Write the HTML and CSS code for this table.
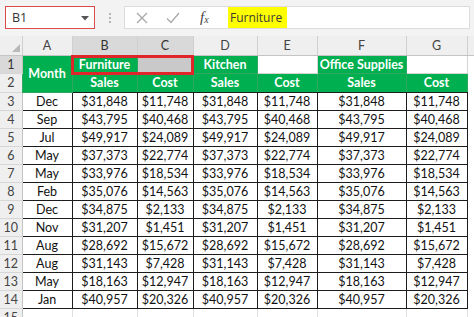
FILE: index.html
```html
<!DOCTYPE html>
<html>
<head>
<meta charset="utf-8">
<link rel="stylesheet" href="styles.css">
</head>
<body>
<div class="app">
  <div class="formula-bar">
    <div class="namebox">
      <span class="ref">B1</span>
      <svg class="caret" width="8" height="5" viewBox="0 0 8 5"><path d="M0 0 L8 0 L4 4.5 Z" fill="#555"/></svg>
    </div>
    <div class="dots"><i></i><i></i><i></i></div>
    <div class="fbox">
      <div class="ficons">
        <svg width="12" height="12" viewBox="0 0 12 12"><path d="M1 1 L11 11 M11 1 L1 11" stroke="#a8a8a8" stroke-width="1.3" fill="none"/></svg>
        <svg width="14" height="12" viewBox="0 0 14 12"><path d="M1 6.5 L5 10.5 L13 1" stroke="#a8a8a8" stroke-width="1.3" fill="none"/></svg>
        <span class="fx">f<sub>x</sub></span>
      </div>
      <div class="fcontent"><span class="hl">Furniture</span></div>
    </div>
  </div>
  <div class="sheet">
    <table class="grid">
      <colgroup>
        <col class="c-rn"><col class="c-a"><col class="c-b"><col class="c-c"><col class="c-d"><col class="c-e"><col class="c-f"><col class="c-g"><col class="c-h">
      </colgroup>
      <tr class="colhead">
        <th class="corner"><svg width="8" height="8" viewBox="0 0 8 8"><path d="M8 0 L8 8 L0 8 Z" fill="#b9b9b9"/></svg></th>
        <th>A</th><th class="sel">B</th><th class="sel">C</th><th>D</th><th>E</th><th>F</th><th>G</th><th></th>
      </tr>
      <tr class="hrow">
        <th class="rn sel">1</th>
        <td class="g month" rowspan="2">Month</td>
        <td class="g">Furniture</td>
        <td class="gsel"></td>
        <td class="g">Kitchen</td>
        <td class="w"></td>
        <td class="g">Office Supplies</td>
        <td class="w"></td>
        <td class="blank"></td>
      </tr>
      <tr class="hrow">
        <th class="rn">2</th>
        <td class="g">Sales</td><td class="g">Cost</td><td class="g">Sales</td><td class="g">Cost</td><td class="g">Sales</td><td class="g">Cost</td>
        <td class="blank"></td>
      </tr>
      <tr><th class="rn">3</th><td>Dec</td><td>$31,848</td><td>$11,748</td><td>$31,848</td><td>$11,748</td><td>$31,848</td><td>$11,748</td><td class="blank"></td></tr>
      <tr><th class="rn">4</th><td>Sep</td><td>$43,795</td><td>$40,468</td><td>$43,795</td><td>$40,468</td><td>$43,795</td><td>$40,468</td><td class="blank"></td></tr>
      <tr><th class="rn">5</th><td>Jul</td><td>$49,917</td><td>$24,089</td><td>$49,917</td><td>$24,089</td><td>$49,917</td><td>$24,089</td><td class="blank"></td></tr>
      <tr><th class="rn">6</th><td>May</td><td>$37,373</td><td>$22,774</td><td>$37,373</td><td>$22,774</td><td>$37,373</td><td>$22,774</td><td class="blank"></td></tr>
      <tr><th class="rn">7</th><td>May</td><td>$33,976</td><td>$18,534</td><td>$33,976</td><td>$18,534</td><td>$33,976</td><td>$18,534</td><td class="blank"></td></tr>
      <tr><th class="rn">8</th><td>Feb</td><td>$35,076</td><td>$14,563</td><td>$35,076</td><td>$14,563</td><td>$35,076</td><td>$14,563</td><td class="blank"></td></tr>
      <tr><th class="rn">9</th><td>Dec</td><td>$34,875</td><td>$2,133</td><td>$34,875</td><td>$2,133</td><td>$34,875</td><td>$2,133</td><td class="blank"></td></tr>
      <tr><th class="rn">10</th><td>Nov</td><td>$31,207</td><td>$1,451</td><td>$31,207</td><td>$1,451</td><td>$31,207</td><td>$1,451</td><td class="blank"></td></tr>
      <tr><th class="rn">11</th><td>Aug</td><td>$28,692</td><td>$15,672</td><td>$28,692</td><td>$15,672</td><td>$28,692</td><td>$15,672</td><td class="blank"></td></tr>
      <tr><th class="rn">12</th><td>Aug</td><td>$31,143</td><td>$7,428</td><td>$31,143</td><td>$7,428</td><td>$31,143</td><td>$7,428</td><td class="blank"></td></tr>
      <tr><th class="rn">13</th><td>May</td><td>$18,163</td><td>$12,947</td><td>$18,163</td><td>$12,947</td><td>$18,163</td><td>$12,947</td><td class="blank"></td></tr>
      <tr><th class="rn">14</th><td>Jan</td><td>$40,957</td><td>$20,326</td><td>$40,957</td><td>$20,326</td><td>$40,957</td><td>$20,326</td><td class="blank"></td></tr>
      <tr class="empty"><th class="rn">15</th><td></td><td></td><td></td><td></td><td></td><td></td><td></td><td class="blank"></td></tr>
    </table>
    <div class="selbox"></div>
  </div>
</div>
</body>
</html>
```
FILE: styles.css
```css
* { box-sizing: border-box; }
html, body { margin: 0; padding: 0; }
body {
  width: 474px;
  height: 317px;
  overflow: hidden;
  background: #f3f3f3;
  font-family: "Open Sans", "Liberation Sans", sans-serif;
}
.app { display: flex; flex-direction: column; }

.formula-bar {
  height: 36px;
  display: flex;
  align-items: flex-start;
  padding: 6px 4px 0 5px;
  background: #f3f3f3;
}
.namebox {
  width: 90px;
  height: 23px;
  border: 1.5px solid #dd4a4a;
  background: #fff;
  display: flex;
  align-items: center;
  justify-content: space-between;
  padding: 0 5px 0 6px;
}
.ref { font-size: 12.5px; color: #333; }
.caret { margin-top: 1px; }
.dots {
  width: 29px;
  height: 23px;
  display: flex;
  flex-direction: column;
  align-items: center;
  justify-content: center;
  gap: 2px;
}
.dots i { display: block; width: 2px; height: 2px; background: #b5b5b5; }
.fbox {
  flex: 1;
  height: 23px;
  background: #fff;
  border: 1px solid #dcdcdc;
  display: flex;
  align-items: stretch;
}
.ficons {
  width: 103px;
  display: flex;
  align-items: center;
  padding-left: 11px;
}
.ficons svg:first-child { margin-right: 18px; }
.ficons svg:nth-child(2) { margin-right: 20px; }
.fx {
  font-family: "Liberation Serif", serif;
  font-style: italic;
  font-size: 15px;
  color: #444;
  line-height: 1;
}
.fx sub { font-size: 10px; vertical-align: -1px; }
.fcontent { flex: 1; display: flex; align-items: stretch; }
.hl {
  background: #ffff00;
  color: #3a3a3a;
  font-size: 12px;
  padding: 0 5px 0 2px;
  display: flex;
  align-items: center;
}

.sheet { position: relative; background: #fff; }
.grid {
  border-collapse: collapse;
  table-layout: fixed;
  width: 474px;
  font-family: Lato, "Liberation Sans", sans-serif;
  font-size: 12.5px;
}
.c-rn { width: 22px; }
.c-a { width: 50px; }
.c-b { width: 65px; }
.c-c { width: 56px; }
.c-d { width: 64px; }
.c-e { width: 60px; }
.c-f { width: 89px; }
.c-g { width: 61px; }
.c-h { width: 7px; }

.grid th, .grid td { padding: 0; text-align: center; overflow: hidden; white-space: nowrap; }
.colhead th {
  height: 19px;
  background: #efefef;
  color: #444;
  font-weight: normal;
  font-size: 12.5px;
  border-left: 1px solid #d0d0d0;
  border-right: 1px solid #d0d0d0;
  border-bottom: 1px solid #c4c4c4;
  border-top: 0;
}
.colhead th.sel { background: #d9d9d9; color: #333; border-bottom: 1px solid #b4b4b4; }
.colhead th.corner { border-left: 0; text-align: right; vertical-align: bottom; padding: 0 2px 3px 0; }
.colhead th.corner svg { display: block; margin-left: auto; }

.grid tr { height: 18px; }
.grid tr.hrow { height: 18.5px; }
.rn {
  background: #efefef;
  color: #444;
  font-weight: normal;
  font-size: 12.5px;
  border-right: 1px solid #c4c4c4;
  border-bottom: 1px solid #d6d6d6;
}
.rn.sel { background: #d9d9d9; color: #333; }

.grid td {
  border: 1px solid #1c1c1c;
  color: #111;
}
.grid td.g {
  background: #00b050;
  color: #fff;
  font-weight: bold;
  border: 1px solid #2da85e;
}
.grid td.gsel {
  background: #c9c9c9;
  border: 1px solid #2da85e;
}
.grid td.w {
  background: #fff;
  border: 1px solid #d4d4d4;
}
.hrow:nth-child(3) td.g { border-bottom: 1px solid #1c1c1c; }
.grid td.month { vertical-align: middle; }
.grid td.blank { border: 0; border-left: 1px solid #1c1c1c; background: #fff; }
.empty td { border: 0; border-top: 1px solid #1c1c1c; border-right: 1px solid #e0e0e0; }

.selbox {
  position: absolute;
  left: 71px;
  top: 19px;
  width: 123px;
  height: 20px;
  border: 3px solid #e0252b;
  pointer-events: none;
}
```
